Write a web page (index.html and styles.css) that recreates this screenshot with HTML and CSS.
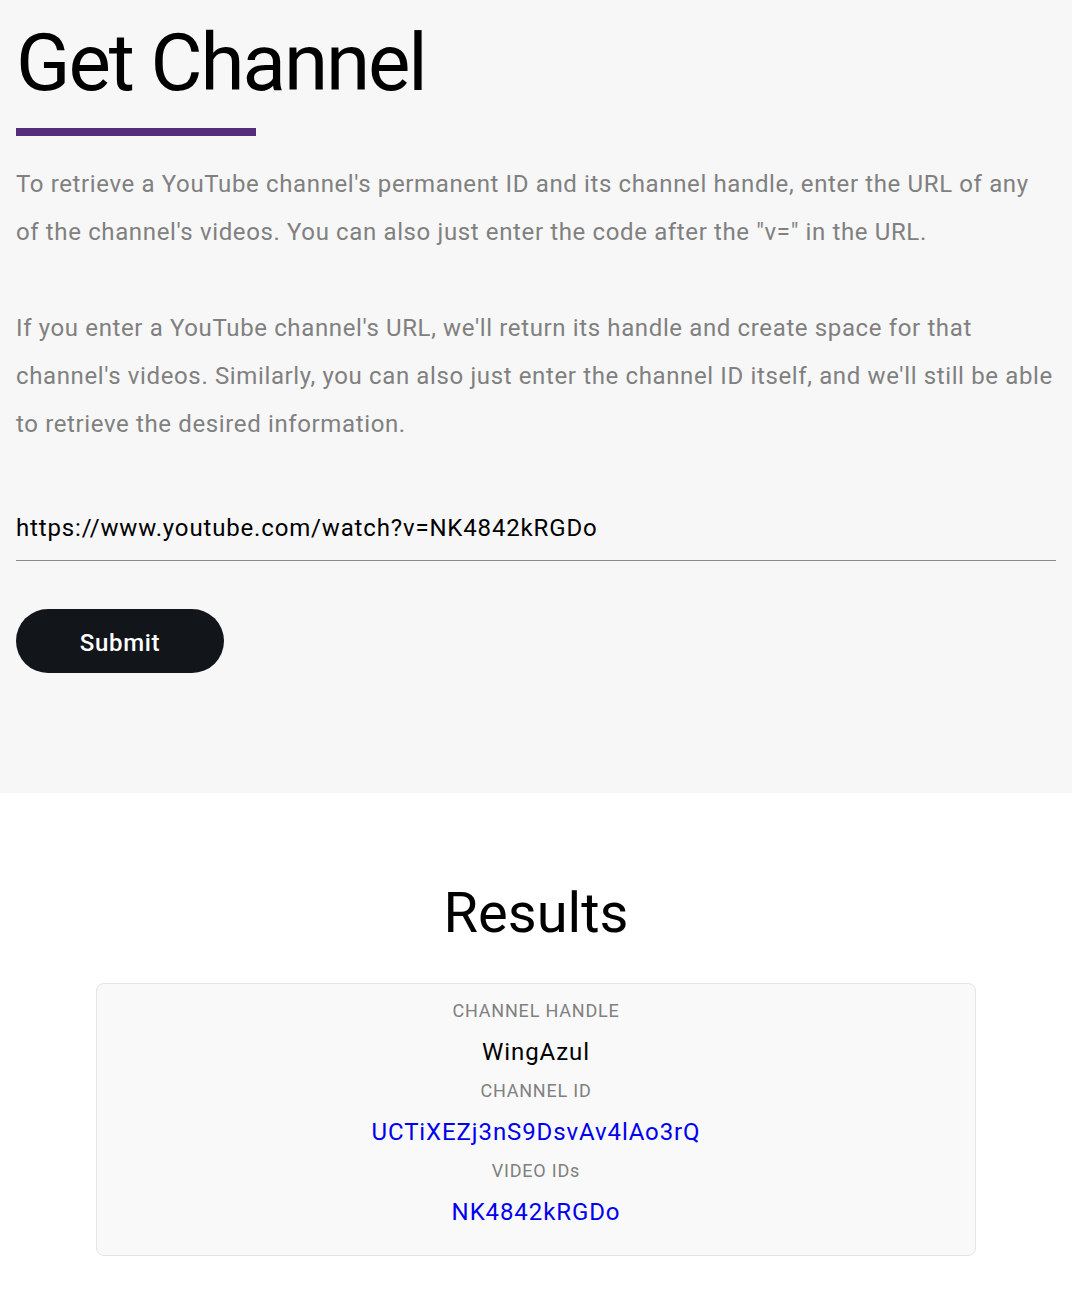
FILE: index.html
```html
<!DOCTYPE html>
<html lang="en">
<head>
<meta charset="utf-8">
<title>Get Channel</title>
<link rel="stylesheet" href="styles.css">
</head>
<body>
<section class="hero">
  <h1 class="title">Get Channel</h1>
  <div class="title-bar"></div>
  <p class="intro">To retrieve a YouTube channel's permanent ID and its channel handle, enter the URL of any of the channel's videos. You can also just enter the code after the "v=" in the URL.</p>
  <p class="intro">If you enter a YouTube channel's URL, we'll return its handle and create space for that channel's videos. Similarly, you can also just enter the channel ID itself, and we'll still be able to retrieve the desired information.</p>
  <form class="lookup">
    <input class="url-input" type="text" value="https://www.youtube.com/watch?v=NK4842kRGDo">
    <button class="submit" type="button">Submit</button>
  </form>
</section>
<section class="results">
  <h2 class="results-title">Results</h2>
  <div class="card">
    <div class="label">CHANNEL HANDLE</div>
    <div class="value">WingAzul</div>
    <div class="label">CHANNEL ID</div>
    <a class="value link" href="#">UCTiXEZj3nS9DsvAv4lAo3rQ</a>
    <div class="label">VIDEO IDs</div>
    <a class="value link" href="#">NK4842kRGDo</a>
  </div>
</section>
</body>
</html>
```
FILE: styles.css
```css
* { box-sizing: border-box; }
html, body { margin: 0; padding: 0; background: #ffffff; }
body { font-family: Roboto, "Liberation Sans", sans-serif; color: #000; }

.hero {
  background: #f7f7f7;
  padding: 16px 16px 120px;
}
.title {
  margin: 0;
  font-size: 80px;
  font-weight: 400;
  line-height: normal;
  letter-spacing: -2.1px;
}
.title-bar {
  width: 240px;
  height: 8px;
  background: #552d7b;
  margin-top: 18px;
  margin-bottom: 24px;
}
.intro {
  margin: 0 0 48px;
  font-size: 24px;
  line-height: 48px;
  letter-spacing: 0.63px;
  color: #808080;
}
.lookup {
  display: flex;
  flex-direction: column;
  align-items: flex-start;
  gap: 48px;
}
.url-input {
  width: 100%;
  height: 65px;
  padding: 0;
  border: none;
  border-bottom: 1px solid #8a8a8a;
  background: transparent;
  font-family: inherit;
  font-size: 24px;
  letter-spacing: 0.84px;
  color: #000;
  outline: none;
}
.submit {
  width: 208px;
  height: 64px;
  padding: 3px 0 0;
  border: none;
  border-radius: 32px;
  background: #12151a;
  color: #fff;
  font-family: inherit;
  font-size: 24px;
  font-weight: 500;
  letter-spacing: 0.7px;
}

.results {
  padding: 87px 0 40px;
  display: flex;
  flex-direction: column;
  align-items: center;
}
.results-title {
  margin: 0 0 37px;
  font-size: 56px;
  font-weight: 400;
  line-height: normal;
}
.card {
  width: 880px;
  background: #f9f9f9;
  border: 1px solid #e4e4e4;
  border-radius: 8px;
  padding: 8px 16px 23px;
  display: flex;
  flex-direction: column;
  align-items: center;
}
.label {
  font-size: 18px;
  line-height: 38px;
  letter-spacing: 0.8px;
  color: #808080;
}
.value {
  padding-top: 2px;
  font-size: 24px;
  line-height: 40px;
  letter-spacing: 0.9px;
  color: #000;
}
.link {
  color: #0000ee;
  text-decoration: none;
}
```
